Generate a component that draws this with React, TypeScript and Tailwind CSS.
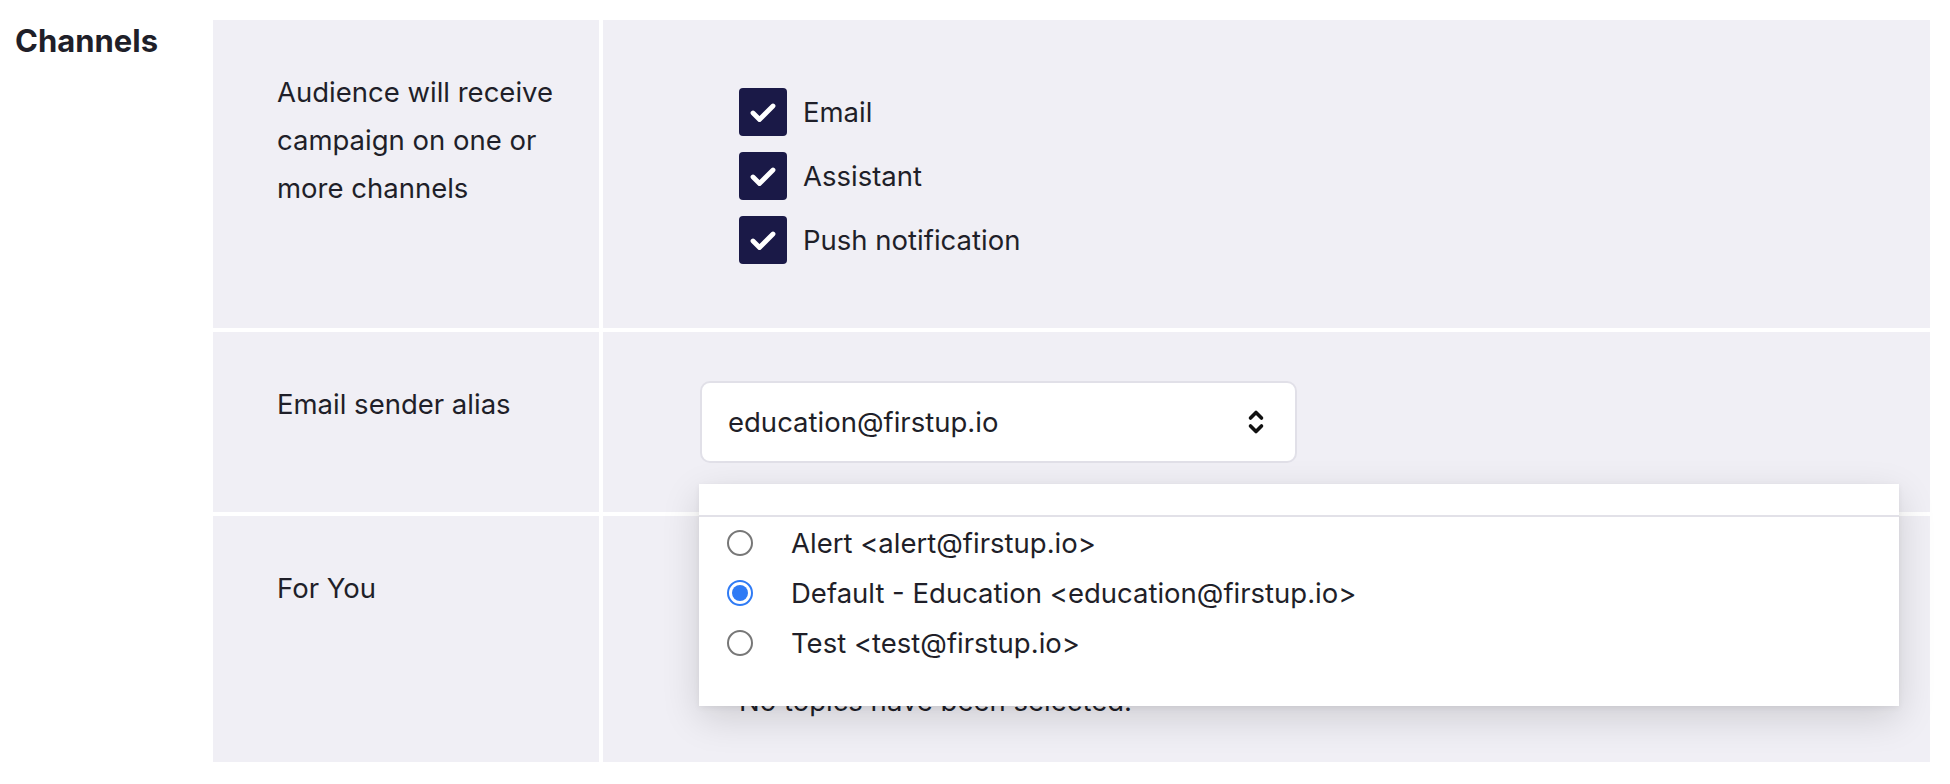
import { useState } from "react";

const channels = ["Email", "Assistant", "Push notification"];

const aliases = [
  { id: "alert", label: "Alert <alert@firstup.io>" },
  { id: "education", label: "Default - Education <education@firstup.io>" },
  { id: "test", label: "Test <test@firstup.io>" },
];

const CheckBox = () => (
  <span className="block w-[48px] h-[48px] rounded-[4px] bg-[#1a1947]">
    <svg width="48" height="48" viewBox="0 0 48 48" fill="none">
      <path d="M14 25L20.5 31.5L34 18" stroke="#fff" strokeWidth="4.8" strokeLinecap="round" strokeLinejoin="round" />
    </svg>
  </span>
);

const Radio = ({ checked }: { checked: boolean }) =>
  checked ? (
    <span className="flex items-center justify-center w-[26px] h-[26px] rounded-full border-2 border-[#2f7bf5] bg-white">
      <span className="w-[16px] h-[16px] rounded-full bg-[#2f7bf5]" />
    </span>
  ) : (
    <span className="w-[26px] h-[26px] rounded-full border-2 border-[#777] bg-white" />
  );

const App = () => {
  const [selected, setSelected] = useState("education");

  return (
    <div className="flex min-h-[784px] bg-white pt-5 font-[Inter,sans-serif] text-[#1f1f29]">
      <div className="w-[213px] shrink-0 pl-[15px] pt-[2px]">
        <h2 className="text-[31px] leading-[37px] font-bold">Channels</h2>
      </div>

      <div className="grid grid-cols-[386px_1327px] grid-rows-[308px_180px_246px] gap-1 text-[27.5px] leading-[48px]">
        {/* row 1 */}
        <div className="bg-[#f0eff5] pl-16 pr-7 pt-12">
          Audience will receive campaign on one or more channels
        </div>
        <div className="bg-[#f0eff5] pl-[136px] pt-[68px]">
          <ul className="flex flex-col gap-4">
            {channels.map((c) => (
              <li key={c} className="flex items-center gap-4">
                <CheckBox />
                <span>{c}</span>
              </li>
            ))}
          </ul>
        </div>

        {/* row 2 */}
        <div className="bg-[#f0eff5] pl-16 pt-12">Email sender alias</div>
        <div className="bg-[#f0eff5] pl-[97px] pt-[49px] z-10">
          <div className="relative w-[597px]">
            <button className="flex items-center justify-between w-full h-[82px] pl-[26px] pr-[30px] bg-white border-2 border-[#e1e0e8] rounded-[10px]">
              <span>education@firstup.io</span>
              <svg width="18" height="32" viewBox="0 0 18 32" fill="none">
                <path d="M3.5 12L9 6.5L14.5 12" stroke="#111" strokeWidth="3.6" strokeLinecap="round" strokeLinejoin="round" />
                <path d="M3.5 20L9 25.5L14.5 20" stroke="#111" strokeWidth="3.6" strokeLinecap="round" strokeLinejoin="round" />
              </svg>
            </button>

            <div className="absolute left-[-1px] top-[103px] w-[1200px] h-[222px] bg-white shadow-[0_12px_36px_rgba(0,0,0,0.14),0_2px_6px_rgba(0,0,0,0.06)]">
              <div className="h-[33px] border-b-2 border-[#e2e1e8]" />
              <ul className="flex flex-col pt-[1px]">
                {aliases.map((a) => (
                  <li
                    key={a.id}
                    onClick={() => setSelected(a.id)}
                    className="flex items-center h-[50px] pl-[28px] gap-[38px] cursor-pointer"
                  >
                    <Radio checked={selected === a.id} />
                    <span>{a.label}</span>
                  </li>
                ))}
              </ul>
            </div>
          </div>
        </div>

        {/* row 3 */}
        <div className="bg-[#f0eff5] pl-16 pt-12">For You</div>
        <div className="bg-[#f0eff5] pl-[136px] pt-[161px]">No topics have been selected.</div>
      </div>
    </div>
  );
};

export default App;
